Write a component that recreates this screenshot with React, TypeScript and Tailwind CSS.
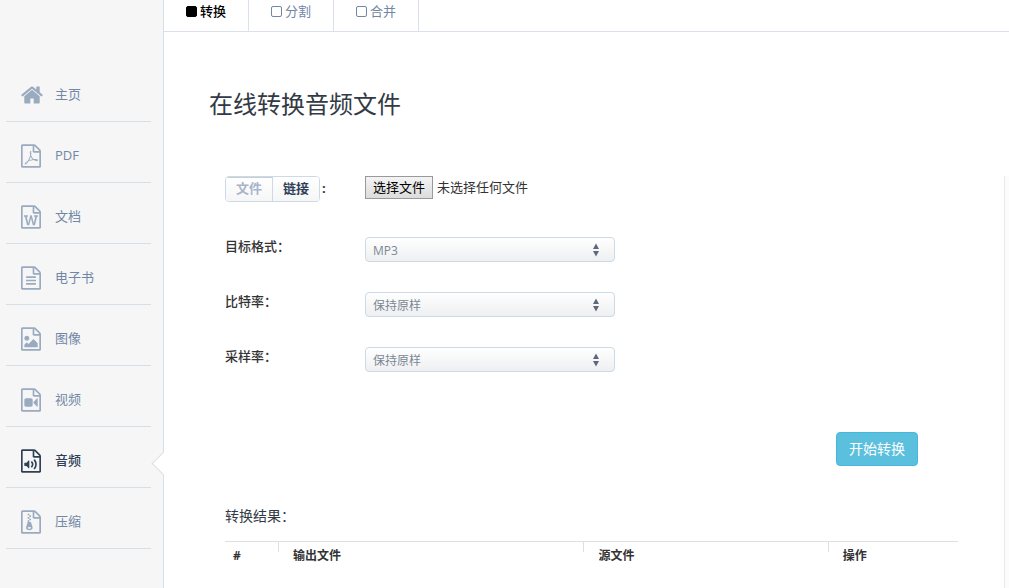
import { useRef, useState } from 'react';
import type { ReactNode } from 'react';
import clsx from 'clsx';

const PAGE_PATH =
    'M1468 380q28 28 48 76t20 88v1152q0 40-28 68t-68 28h-1344q-40 0-68-28t-28-68v-1600q0-40 28-68t68-28h896q40 0 88 20t76 48zm-444-244v376h376q-10-29-22-41l-313-313q-12-12-41-22zm384 1528v-1024h-416q-40 0-68-28t-28-68v-416h-768v1536h1280z';

function HomeIcon() {
    return (
        <svg viewBox="0 0 1792 1792" className="size-6 fill-current" aria-hidden="true">
            <path d="M1472 992v480q0 26-19 45t-45 19h-384v-384h-256v384h-384q-26 0-45-19t-19-45v-480q0-1 .5-3t.5-3l575-474 575 474q1 2 1 6zm223-69l-62 74q-8 9-21 11h-3q-13 0-21-7l-692-577-692 577q-12 8-24 7-13-2-21-11l-62-74q-8-10-7-23.5t11-21.5l719-599q32-26 76-26t76 26l244 204v-195q0-14 9-23t23-9h192q14 0 23 9t9 23v408l219 182q10 8 11 21.5t-7 23.5z" />
        </svg>
    );
}

function FileIcon({ children }: { children: ReactNode }) {
    return (
        <svg viewBox="0 0 1536 1792" className="ml-px h-6 w-5 fill-current" aria-hidden="true">
            <path d={PAGE_PATH} />
            {children}
        </svg>
    );
}

type NavItem = { label: string; icon: ReactNode; active?: boolean };

const navItems: NavItem[] = [
    { label: '主页', icon: <HomeIcon /> },
    {
        label: 'PDF',
        icon: (
            <FileIcon>
                <path
                    transform="translate(-128 0)"
                    d="M1050 1079q33 26 84 56 59-7 117-7 147 0 177 49 16 22 2 52 0 1-1 2l-2 2v1q-6 38-71 38-48 0-115-20t-130-53q-221 24-392 83-153 262-242 262-15 0-28-7l-24-12q-1-1-6-5-10-10-6-36 9-40 56-91.5t132-96.5q14-9 23 6 2 2 2 4 52-85 107-197 68-136 104-262-24-82-30.5-159.5t6.5-127.5q11-40 42-40h22q23 0 35 15 18 21 9 68-2 6-4 8 1 3 1 8v30q-2 123-14 192 55 164 146 238zm-576 411q52-24 137-158-51 40-87.5 84t-49.5 74zm398-920q-15 42-2 132 1-7 7-44 0-3 7-43 1-4 4-8-1-1-1-2-1-2-1-3-1-22-13-36 0 1-1 2v2zm-124 661q135-54 284-81-2-1-13-9.5t-16-13.5q-76-67-127-176-27 86-83 197-30 56-45 83zm646-16q-24-24-140-24 76 28 124 28 14 0 18-1 0-1-2-3z"
                />
            </FileIcon>
        ),
    },
    {
        label: '文档',
        icon: (
            <FileIcon>
                <path d="M233 768v107h70l164 661h159l128-485q7-20 10-46 2-16 2-24h4l3 24q1 3 3.500 20t5.500 26l128 485h159l164-661h70v-107h-300v107h90l-99 438q-5 20-7 46l-2 21h-4q0-3-.5-6.500t-1.500-8-1-6.500q-1-5-4-21t-5-25l-144-545h-114l-144 545q-2 9-4.500 24.500t-3.500 21.500l-4 21h-4l-2-21q-2-26-7-46l-99-438h90v-107h-300z" />
            </FileIcon>
        ),
    },
    {
        label: '电子书',
        icon: (
            <FileIcon>
                <rect x="384" y="768" width="768" height="128" rx="32" />
                <rect x="384" y="1024" width="768" height="128" rx="32" />
                <rect x="384" y="1280" width="768" height="128" rx="32" />
            </FileIcon>
        ),
    },
    {
        label: '图像',
        icon: (
            <FileIcon>
                <path d="M1280 1216v320h-1024v-192l192-192 128 128 384-384zm-832-192q-80 0-136-56t-56-136 56-136 136-56 136 56 56 136-56 136-136 56z" />
            </FileIcon>
        ),
    },
    {
        label: '视频',
        icon: (
            <FileIcon>
                <path d="M768 768q52 0 90 38t38 90v384q0 52-38 90t-90 38h-384q-52 0-90-38t-38-90v-384q0-52 38-90t90-38h384zm492 2q20 8 20 30v576q0 22-20 30-8 2-12 2-14 0-23-9l-265-266v-90l265-266q9-9 23-9 4 0 12 2z" />
            </FileIcon>
        ),
    },
    {
        label: '音频',
        active: true,
        icon: (
            <FileIcon>
                <path d="M620 850q20 8 20 30v544q0 22-20 30-8 2-12 2-12 0-23-9l-166-167h-131q-14 0-23-9t-9-23v-192q0-14 9-23t23-9h131l166-167q16-15 35-7zm417 689q31 0 50-24 129-159 129-363t-129-363q-16-21-43-24t-47 14q-21 17-23.5 43.5t14.5 47.5q100 123 100 282t-100 282q-17 21-14.5 47.5t23.5 42.5q18 15 40 15zm-211-148q27 0 47-20 87-93 87-219t-87-219q-18-19-45-20t-46 17-20 44.500 18 46.500q52 57 52 131t-52 131q-19 20-18 46.500t20 44.500q20 17 44 17z" />
            </FileIcon>
        ),
    },
    {
        label: '压缩',
        icon: (
            <FileIcon>
                <path d="M640 384v-128h-128v128h128zm128 128v-128h-128v128h128zm-128 128v-128h-128v128h128zm128 128v-128h-128v128h128z" />
                <path d="M781 943l107 349q8 27 8 52 0 83-72.500 137.500t-183.500 54.500-183.500-54.500-72.500-137.500q0-25 8-52 21-63 120-396v-128h128v128h79q22 0 39 13t23 34zm-141 465q53 0 90.500-19t37.500-45-37.500-45-90.500-19-90.500 19-37.500 45 37.500 45 90.500 19z" />
            </FileIcon>
        ),
    },
];

const tabs = ['转换', '分割', '合并'];

const fields = [
    { id: 'format', label: '目标格式：', options: ['MP3', 'WAV', 'FLAC', 'OGG'] },
    { id: 'bitrate', label: '比特率：', options: ['保持原样', '128k', '192k', '320k'] },
    { id: 'sample-rate', label: '采样率：', options: ['保持原样', '22050', '44100', '48000'] },
];

const columns = [
    { label: '输出文件', width: 'w-5/12' },
    { label: '源文件', width: 'w-1/3' },
    { label: '操作', width: 'w-auto' },
];

function Sidebar() {
    return (
        <nav className="w-[164px] shrink-0 border-r border-[#d5dfe7] bg-[#f6f6f6] pt-[61px]">
            <ul>
                {navItems.map((item) => (
                    <li key={item.label} className="relative pr-3 pl-1.5">
                        <a
                            href="#"
                            className={clsx(
                                'flex h-[61px] items-center border-b border-[#d6dfe8] pt-2 pl-3.5 text-[13px]',
                                item.active ? 'font-medium text-[#2f4056]' : 'text-[#7187a5]',
                            )}
                        >
                            <span className={clsx('w-[35px]', !item.active && 'text-[#9aabc0]')}>{item.icon}</span>
                            {item.label}
                        </a>
                        {item.active && (
                            <span className="absolute top-7 -right-[9px] size-[17px] rotate-45 border-b border-l border-[#d5dfe7] bg-white" />
                        )}
                    </li>
                ))}
            </ul>
        </nav>
    );
}

function SelectField({ id, label, options }: { id: string; label: string; options: string[] }) {
    return (
        <div className="flex">
            <label htmlFor={id} className="w-[140px] shrink-0 text-[13px] leading-[18px] font-medium text-[#333]">
                {label}
            </label>
            <div className="relative w-full max-w-[250px]">
                <select
                    id={id}
                    className="block h-[25px] w-full appearance-none rounded border border-[#cbdae6] bg-linear-to-b from-white to-[#eeeff1] pt-0.5 pl-[7px] text-xs text-[#7c8794]"
                >
                    {options.map((option) => (
                        <option key={option}>{option}</option>
                    ))}
                </select>
                <svg viewBox="0 0 8 14" className="pointer-events-none absolute top-1.5 right-[15px] h-3.5 w-2 fill-[#5d697b]" aria-hidden="true">
                    <path d="M4 0.500 7 6H1zM4 13.500 1 8h6z" />
                </svg>
            </div>
        </div>
    );
}

export default function App() {
    const fileInput = useRef<HTMLInputElement>(null);
    const [fileName, setFileName] = useState('未选择任何文件');

    return (
        <div className="flex min-h-screen bg-white font-['Open_Sans','Noto_Sans_CJK_SC',sans-serif] text-[13px] text-[#333]">
            <Sidebar />
            <main className="flex min-w-0 flex-1 flex-col">
                <nav className="flex h-8 border-b border-[#dbe1ec]">
                    {tabs.map((tab, index) => (
                        <a
                            key={tab}
                            href="#"
                            className={clsx(
                                'flex items-center gap-[3px] border-r border-[#dbe1ec] px-[22px] pb-2',
                                index === 0 ? 'font-medium text-black' : 'text-[#7187a5]',
                            )}
                        >
                            <span className={clsx('size-[11px] rounded-xs border border-current', index === 0 && 'bg-current')} />
                            {tab}
                        </a>
                    ))}
                </nav>
                <h1 className="mt-14 ml-[45px] text-2xl leading-8 text-[#323a45]">在线转换音频文件</h1>
                <div className="mt-14 flex flex-1 bg-[#fcfcfc] pr-1">
                    <div className="min-w-0 flex-1 border-r border-[#e8e9ec] bg-white pr-[46px] pl-[61px]">
                        <form onSubmit={(event) => event.preventDefault()}>
                            <div className="flex items-start">
                                <div className="flex w-[140px] shrink-0 items-center font-bold">
                                    <div className="flex h-[26px] overflow-hidden rounded border border-[#cbdae6]">
                                        <button
                                            type="button"
                                            aria-pressed="true"
                                            className="w-[47px] border-r border-[#cbdae6] bg-linear-to-b from-white to-[#f6f6f6] text-[#a6b5ca] shadow-[inset_0_1px_0_#c9ced4]"
                                        >
                                            文件
                                        </button>
                                        <button type="button" aria-pressed="false" className="w-[46px] bg-linear-to-b from-white to-[#f6f6f6] text-[#2f4056]">
                                            链接
                                        </button>
                                    </div>
                                    <span className="ml-0.5">:</span>
                                </div>
                                <div className="flex items-center gap-1 text-black">
                                    <button
                                        type="button"
                                        onClick={() => fileInput.current?.click()}
                                        className="h-[23px] w-[68px] border border-[#999] bg-linear-to-b from-[#f4f4f4] to-[#dcdcdc]"
                                    >
                                        选择文件
                                    </button>
                                    <span className="text-[#333]">{fileName}</span>
                                    <input
                                        ref={fileInput}
                                        type="file"
                                        aria-label="选择文件"
                                        className="hidden"
                                        onChange={(event) => setFileName(event.target.files?.[0]?.name ?? '未选择任何文件')}
                                    />
                                </div>
                            </div>
                            <div className="mt-[35px] space-y-[30px]">
                                {fields.map((field) => (
                                    <SelectField key={field.id} {...field} />
                                ))}
                            </div>
                            <div className="mt-[60px] flex justify-end pr-10">
                                <button type="submit" className="h-[34px] rounded border border-[#46b8da] bg-[#5bc0de] px-3 text-sm text-white">
                                    开始转换
                                </button>
                            </div>
                        </form>
                        <h2 className="mt-10 text-sm text-[#323a45]">转换结果：</h2>
                        <table className="mt-[15px] w-full table-fixed border-t border-[#dddfe6] text-left text-xs">
                            <thead>
                                <tr className="h-7">
                                    <th className="w-[53px] pl-2">#</th>
                                    {columns.map((column) => (
                                        <th
                                            key={column.label}
                                            className={clsx(
                                                'relative pl-[15px] before:absolute before:top-0 before:left-0 before:h-2.5 before:w-px before:bg-[#dddfe6]',
                                                column.width,
                                            )}
                                        >
                                            {column.label}
                                        </th>
                                    ))}
                                </tr>
                            </thead>
                        </table>
                    </div>
                </div>
            </main>
        </div>
    );
}
